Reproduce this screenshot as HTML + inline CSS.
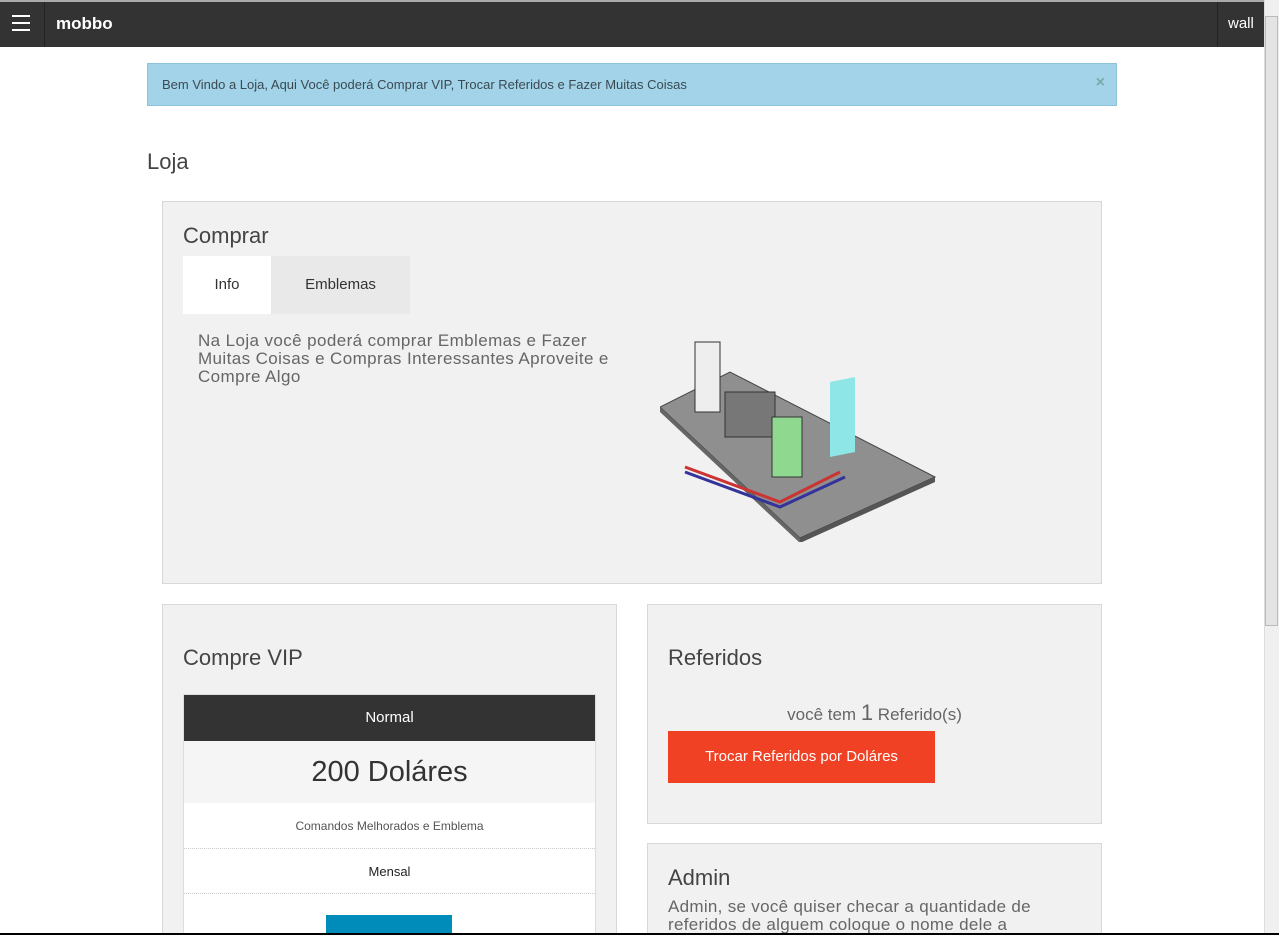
<!DOCTYPE html>
<html><head><meta charset="utf-8"><style>
*{box-sizing:border-box;margin:0;padding:0}
html,body{width:1279px;height:935px;overflow:hidden}
body{background:#fff;font-family:"Liberation Sans",sans-serif;position:relative}
.abs{position:absolute}
.nav{left:0;top:2px;width:1264px;height:45px;background:#333}
.panel{background:#f1f1f1;border:1px solid #d8d8d8}
.light{color:#444}
</style></head><body>
<div class="abs" style="left:0;top:0;width:1264px;height:2px;background:#aaa"></div>
<div class="abs nav">
 <div class="abs" style="left:12px;top:13px;width:18px;height:2px;background:#fff"></div>
 <div class="abs" style="left:12px;top:20px;width:18px;height:2px;background:#fff"></div>
 <div class="abs" style="left:12px;top:27px;width:18px;height:2px;background:#fff"></div>
 <div class="abs" style="left:44px;top:0;width:1px;height:45px;background:#222"></div>
 <div class="abs" style="left:56px;top:12px;color:#fff;font-weight:bold;font-size:17px">mobbo</div>
 <div class="abs" style="left:1217px;top:0;width:1px;height:45px;background:#222"></div>
 <div class="abs" style="left:1228px;top:13px;color:#fff;font-size:15px">wall</div>
</div>

<div class="abs" style="left:147px;top:63px;width:970px;height:43px;background:#a2d3e8;border:1px solid #8cc3da;color:#3a4a52;font-size:13px;padding:13px 14px">Bem Vindo a Loja, Aqui Você poderá Comprar VIP, Trocar Referidos e Fazer Muitas Coisas<span style="position:absolute;right:11px;top:10px;color:#7aa;font-size:16px;font-weight:bold">×</span></div>

<div class="abs light" style="left:147px;top:149px;font-size:22px">Loja</div>

<div class="abs panel" style="left:162px;top:201px;width:940px;height:383px">
 <div class="abs light" style="left:20px;top:21px;font-size:22px">Comprar</div>
 <div class="abs" style="left:20px;top:54px;width:88px;height:58px;background:#fff;text-align:center;line-height:58px;font-size:15px;color:#333">Info</div>
 <div class="abs" style="left:108px;top:54px;width:139px;height:58px;background:#e9e9e9;text-align:center;line-height:58px;font-size:15px;color:#333">Emblemas</div>
 <div class="abs" style="left:35px;top:130px;width:425px;font-size:17px;line-height:18px;color:#666;letter-spacing:0.4px">Na Loja você poderá comprar Emblemas e Fazer Muitas Coisas e Compras Interessantes Aproveite e Compre Algo</div>
 <svg class="abs" style="left:497px;top:130px" width="280" height="210">
  <polygon points="0,75 70,40 275,145 140,206" fill="#8f8f8f" stroke="#444"/>
  <polygon points="0,75 0,80 140,211 140,206" fill="#666"/>
  <polygon points="140,206 275,145 275,150 140,211" fill="#555"/>
  <polygon points="170,50 195,45 195,120 170,125" fill="#8fe6e6"/>
  <path d="M25,135 L120,170 L180,140" stroke="#c33" stroke-width="3" fill="none"/>
  <path d="M25,140 L120,175 L185,145" stroke="#339" stroke-width="3" fill="none"/>
  <rect x="65" y="60" width="50" height="45" fill="#777" stroke="#333"/>
  <rect x="112" y="85" width="30" height="60" fill="#8fd88f" stroke="#333"/>
  <rect x="35" y="10" width="25" height="70" fill="#eee" stroke="#333"/>
 </svg>
</div>

<div class="abs panel" style="left:162px;top:604px;width:455px;height:340px">
 <div class="abs light" style="left:20px;top:40px;font-size:22px">Compre VIP</div>
 <div class="abs" style="left:20px;top:89px;width:413px;height:260px;border:1px solid #ddd;background:#fff">
  <div style="height:46px;background:#333;color:#fff;text-align:center;line-height:46px;font-size:15px">Normal</div>
  <div style="height:62px;background:#f5f5f5;text-align:center;line-height:62px;font-size:29px;color:#333">200 Doláres</div>
  <div style="height:46px;text-align:center;line-height:46px;font-size:12px;color:#555;border-bottom:1px dotted #ccc">Comandos Melhorados e Emblema</div>
  <div style="height:45px;text-align:center;line-height:45px;font-size:13px;color:#222;border-bottom:1px dotted #ccc">Mensal</div>
  <div class="abs" style="left:142px;top:220px;width:126px;height:40px;background:#008cba"></div>
 </div>
</div>

<div class="abs panel" style="left:647px;top:604px;width:455px;height:220px">
 <div class="abs light" style="left:20px;top:40px;font-size:22px">Referidos</div>
 <div class="abs" style="left:0;top:95px;width:100%;text-align:center;font-size:17px;color:#666">você tem <span style="font-size:22px">1</span> Referido(s)</div>
 <div class="abs" style="left:20px;top:126px;width:267px;height:52px;background:#f04124;color:#fff;text-align:center;line-height:52px;font-size:15px">Trocar Referidos por Doláres</div>
</div>

<div class="abs panel" style="left:647px;top:843px;width:455px;height:120px">
 <div class="abs light" style="left:20px;top:21px;font-size:22px">Admin</div>
 <div class="abs" style="left:20px;top:54px;width:400px;font-size:17px;line-height:18px;color:#666;letter-spacing:0.3px">Admin, se você quiser checar a quantidade de referidos de alguem coloque o nome dele a</div>
</div>
<div class="abs" style="left:1264px;top:0;width:15px;height:935px;background:#f0f0f0;border-left:1px solid #ddd"></div>
<div class="abs" style="left:1265px;top:16px;width:13px;height:610px;background:#e4e4e4;border:1px solid #bbb"></div>
<div class="abs" style="left:0;top:933px;width:1279px;height:2px;background:#000"></div>
</body></html>
